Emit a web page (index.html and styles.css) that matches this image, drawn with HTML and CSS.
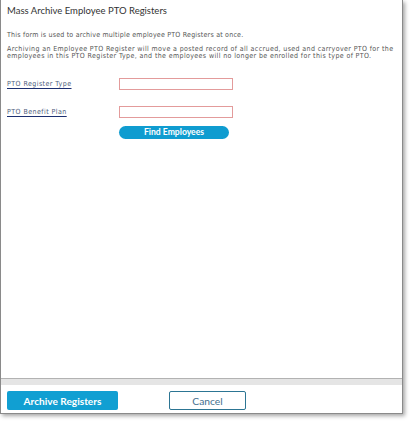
FILE: index.html
```html
<!DOCTYPE html>
<html>
<head>
<meta charset="utf-8">
<title>Mass Archive Employee PTO Registers</title>
<link rel="stylesheet" href="styles.css">
</head>
<body>
<div class="dialog">
  <div class="header"><h1 class="title">Mass Archive Employee PTO Registers</h1></div>
  <div class="content">
    <p class="intro">This form is used to archive multiple employee PTO Registers at once.</p>
    <p class="desc">Archiving an Employee PTO Register will move a posted record of all accrued, used and carryover PTO for the employees in this PTO Register Type, and the employees will no longer be enrolled for this type of PTO.</p>
    <div class="form">
      <div class="row row-first">
        <a class="label" href="#">PTO Register Type</a>
        <input class="field" type="text">
      </div>
      <div class="row">
        <a class="label" href="#">PTO Benefit Plan</a>
        <input class="field" type="text">
      </div>
      <div class="row row-btn">
        <span class="label-spacer"></span>
        <button class="find-btn">Find Employees</button>
      </div>
    </div>
  </div>
  <div class="footer">
    <div class="band"></div>
    <div class="actions">
      <button class="btn-primary">Archive Registers</button>
      <button class="btn-secondary">Cancel</button>
    </div>
  </div>
</div>
</body>
</html>
```

FILE: styles.css
```css
html, body {
  margin: 0;
  padding: 0;
  background: #ffffff;
}
body {
  width: 413px;
  height: 424px;
  overflow: hidden;
}
.dialog {
  box-sizing: border-box;
  width: 403px;
  height: 414px;
  border-left: 1px solid #8a8a8a;
  border-right: 1px solid #8a8a8a;
  border-bottom: 1px solid #8a8a8a;
  background: #ffffff;
  box-shadow: 2px 2px 4px rgba(0, 0, 0, 0.35);
  display: flex;
  flex-direction: column;
}
.header {
  height: 26px;
  box-sizing: border-box;
  padding: 4px 6px 0;
}
.title {
  margin: 0;
  font-family: Lato, "Open Sans", sans-serif;
  font-weight: 400;
  font-size: 9.5px;
  line-height: 14px;
  color: #333333;
}
.content {
  flex: 1;
  padding: 0 2px 0 6px;
  font-family: "DejaVu Sans Condensed", "DejaVu Sans", sans-serif;
  font-size: 7px;
  letter-spacing: 0.22px;
  line-height: 7px;
  color: #555555;
}
.intro {
  margin: 6px 0 0;
}
.desc {
  margin: 7px 0 0;
  letter-spacing: 0.38px;
}
.form {
  display: flex;
  flex-direction: column;
}
.row {
  display: flex;
  align-items: center;
  margin-top: 16px;
}
.row-first {
  margin-top: 18px;
}
.row-btn {
  margin-top: 8px;
}
.label, .label-spacer {
  width: 112px;
  flex: none;
  font-size: 7px;
  letter-spacing: 0.45px;
  line-height: 9px;
  color: #4e5d7c;
  text-decoration: underline;
  text-decoration-color: #1c2f70;
  text-underline-offset: 1.5px;
}
.field {
  box-sizing: border-box;
  width: 114px;
  height: 12px;
  margin: 0;
  padding: 0;
  border: 1px solid #e39b9b;
  background: #ffffff;
  outline: none;
}
.find-btn {
  box-sizing: border-box;
  width: 110px;
  height: 13px;
  margin: 0;
  padding: 0;
  border: none;
  border-radius: 7px;
  background: #0f9cd0;
  color: #ffffff;
  font-family: Lato, "Open Sans", sans-serif;
  font-weight: 700;
  font-size: 8.6px;
  line-height: 13px;
}
.footer {
  border-top: 1px solid #b2b2b2;
}
.band {
  height: 6px;
  background: #e5e5e5;
}
.actions {
  display: flex;
  padding: 6px 0 3px 6px;
}
.btn-primary {
  box-sizing: border-box;
  width: 111px;
  height: 19px;
  margin: 0;
  padding: 0;
  border: none;
  border-radius: 2px;
  background: #119fd2;
  color: #ffffff;
  font-family: Lato, "Open Sans", sans-serif;
  font-weight: 700;
  font-size: 10.1px;
}
.btn-secondary {
  box-sizing: border-box;
  width: 77px;
  height: 19px;
  margin: 0 0 0 51px;
  padding: 0;
  border: 1px solid #2c7593;
  border-radius: 2px;
  background: #ffffff;
  color: #44708e;
  font-family: Lato, "Open Sans", sans-serif;
  font-weight: 400;
  font-size: 10.3px;
}
```
